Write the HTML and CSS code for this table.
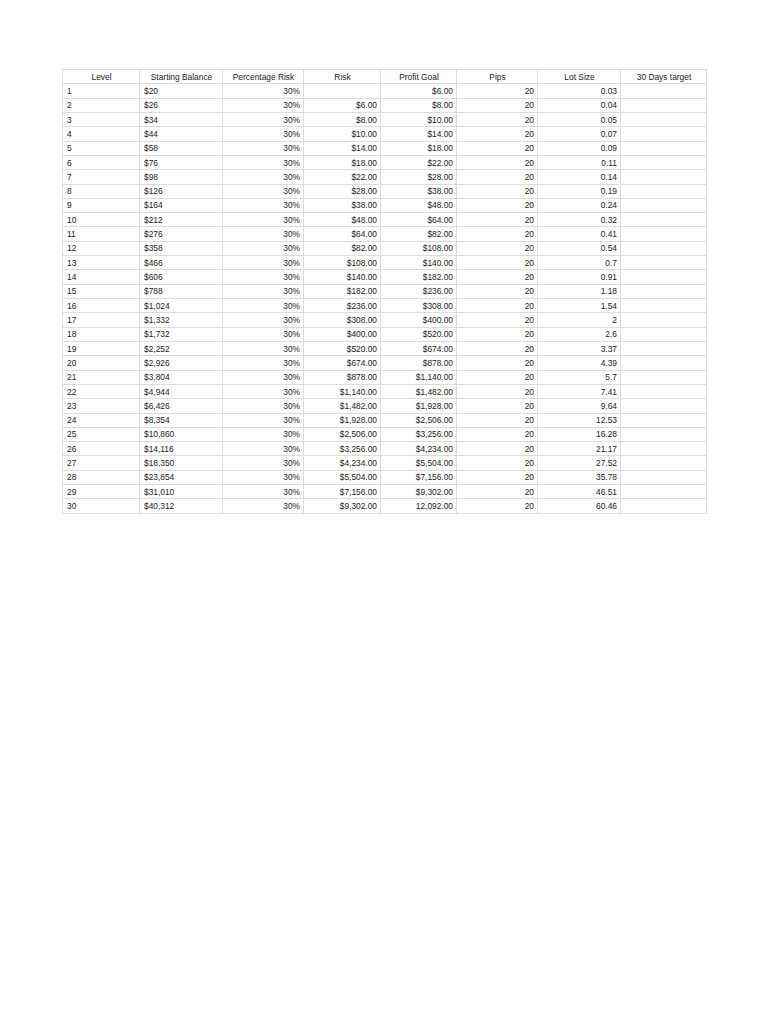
FILE: index.html
```html
<!DOCTYPE html>
<html>
<head>
<meta charset="utf-8">
<link rel="stylesheet" href="styles.css">
</head>
<body>
<div class="page">
<table class="sheet">
<colgroup>
<col class="c1"><col class="c2"><col class="c3"><col class="c4"><col class="c5"><col class="c6"><col class="c7"><col class="c8">
</colgroup>
<thead>
<tr><th>Level</th><th>Starting Balance</th><th>Percentage Risk</th><th>Risk</th><th>Profit Goal</th><th>Pips</th><th>Lot Size</th><th>30 Days target</th></tr>
</thead>
<tbody>
<tr><td>1</td><td>$20</td><td class="r">30%</td><td class="r"></td><td class="r">$6.00</td><td class="r">20</td><td class="r">0.03</td><td></td></tr>
<tr><td>2</td><td>$26</td><td class="r">30%</td><td class="r">$6.00</td><td class="r">$8.00</td><td class="r">20</td><td class="r">0.04</td><td></td></tr>
<tr><td>3</td><td>$34</td><td class="r">30%</td><td class="r">$8.00</td><td class="r">$10.00</td><td class="r">20</td><td class="r">0.05</td><td></td></tr>
<tr><td>4</td><td>$44</td><td class="r">30%</td><td class="r">$10.00</td><td class="r">$14.00</td><td class="r">20</td><td class="r">0.07</td><td></td></tr>
<tr><td>5</td><td>$58</td><td class="r">30%</td><td class="r">$14.00</td><td class="r">$18.00</td><td class="r">20</td><td class="r">0.09</td><td></td></tr>
<tr><td>6</td><td>$76</td><td class="r">30%</td><td class="r">$18.00</td><td class="r">$22.00</td><td class="r">20</td><td class="r">0.11</td><td></td></tr>
<tr><td>7</td><td>$98</td><td class="r">30%</td><td class="r">$22.00</td><td class="r">$28.00</td><td class="r">20</td><td class="r">0.14</td><td></td></tr>
<tr><td>8</td><td>$126</td><td class="r">30%</td><td class="r">$28.00</td><td class="r">$38.00</td><td class="r">20</td><td class="r">0.19</td><td></td></tr>
<tr><td>9</td><td>$164</td><td class="r">30%</td><td class="r">$38.00</td><td class="r">$48.00</td><td class="r">20</td><td class="r">0.24</td><td></td></tr>
<tr><td>10</td><td>$212</td><td class="r">30%</td><td class="r">$48.00</td><td class="r">$64.00</td><td class="r">20</td><td class="r">0.32</td><td></td></tr>
<tr><td>11</td><td>$276</td><td class="r">30%</td><td class="r">$64.00</td><td class="r">$82.00</td><td class="r">20</td><td class="r">0.41</td><td></td></tr>
<tr><td>12</td><td>$358</td><td class="r">30%</td><td class="r">$82.00</td><td class="r">$108.00</td><td class="r">20</td><td class="r">0.54</td><td></td></tr>
<tr><td>13</td><td>$466</td><td class="r">30%</td><td class="r">$108.00</td><td class="r">$140.00</td><td class="r">20</td><td class="r">0.7</td><td></td></tr>
<tr><td>14</td><td>$606</td><td class="r">30%</td><td class="r">$140.00</td><td class="r">$182.00</td><td class="r">20</td><td class="r">0.91</td><td></td></tr>
<tr><td>15</td><td>$788</td><td class="r">30%</td><td class="r">$182.00</td><td class="r">$236.00</td><td class="r">20</td><td class="r">1.18</td><td></td></tr>
<tr><td>16</td><td>$1,024</td><td class="r">30%</td><td class="r">$236.00</td><td class="r">$308.00</td><td class="r">20</td><td class="r">1.54</td><td></td></tr>
<tr><td>17</td><td>$1,332</td><td class="r">30%</td><td class="r">$308.00</td><td class="r">$400.00</td><td class="r">20</td><td class="r">2</td><td></td></tr>
<tr><td>18</td><td>$1,732</td><td class="r">30%</td><td class="r">$400.00</td><td class="r">$520.00</td><td class="r">20</td><td class="r">2.6</td><td></td></tr>
<tr><td>19</td><td>$2,252</td><td class="r">30%</td><td class="r">$520.00</td><td class="r">$674.00</td><td class="r">20</td><td class="r">3.37</td><td></td></tr>
<tr><td>20</td><td>$2,926</td><td class="r">30%</td><td class="r">$674.00</td><td class="r">$878.00</td><td class="r">20</td><td class="r">4.39</td><td></td></tr>
<tr><td>21</td><td>$3,804</td><td class="r">30%</td><td class="r">$878.00</td><td class="r">$1,140.00</td><td class="r">20</td><td class="r">5.7</td><td></td></tr>
<tr><td>22</td><td>$4,944</td><td class="r">30%</td><td class="r">$1,140.00</td><td class="r">$1,482.00</td><td class="r">20</td><td class="r">7.41</td><td></td></tr>
<tr><td>23</td><td>$6,426</td><td class="r">30%</td><td class="r">$1,482.00</td><td class="r">$1,928.00</td><td class="r">20</td><td class="r">9.64</td><td></td></tr>
<tr><td>24</td><td>$8,354</td><td class="r">30%</td><td class="r">$1,928.00</td><td class="r">$2,506.00</td><td class="r">20</td><td class="r">12.53</td><td></td></tr>
<tr><td>25</td><td>$10,860</td><td class="r">30%</td><td class="r">$2,506.00</td><td class="r">$3,256.00</td><td class="r">20</td><td class="r">16.28</td><td></td></tr>
<tr><td>26</td><td>$14,116</td><td class="r">30%</td><td class="r">$3,256.00</td><td class="r">$4,234.00</td><td class="r">20</td><td class="r">21.17</td><td></td></tr>
<tr><td>27</td><td>$18,350</td><td class="r">30%</td><td class="r">$4,234.00</td><td class="r">$5,504.00</td><td class="r">20</td><td class="r">27.52</td><td></td></tr>
<tr><td>28</td><td>$23,854</td><td class="r">30%</td><td class="r">$5,504.00</td><td class="r">$7,156.00</td><td class="r">20</td><td class="r">35.78</td><td></td></tr>
<tr><td>29</td><td>$31,010</td><td class="r">30%</td><td class="r">$7,156.00</td><td class="r">$9,302.00</td><td class="r">20</td><td class="r">46.51</td><td></td></tr>
<tr><td>30</td><td>$40,312</td><td class="r">30%</td><td class="r">$9,302.00</td><td class="r">12,092.00</td><td class="r">20</td><td class="r">60.46</td><td></td></tr>
</tbody>
</table>
</div>
</body>
</html>
```
FILE: styles.css
```css
html, body {
  margin: 0;
  padding: 0;
  background: #ffffff;
}
.page {
  padding: 69px 0 0 62px;
}
.sheet {
  border-collapse: collapse;
  table-layout: fixed;
  width: 644px;
  font-family: "Liberation Sans", Arial, sans-serif;
  font-size: 8.4px;
  color: #222222;
}
.c1 { width: 77px; }
.c2 { width: 83px; }
.c3 { width: 81px; }
.c4 { width: 77px; }
.c5 { width: 76px; }
.c6 { width: 81px; }
.c7 { width: 83px; }
.c8 { width: 86px; }
.sheet tr {
  height: 14.32px;
}
.sheet th,
.sheet td {
  border: 1px solid #dcdcdc;
  padding: 0 3px 0 4px;
  line-height: 12px;
  white-space: nowrap;
  overflow: hidden;
  text-align: left;
  vertical-align: middle;
}
.sheet th {
  font-weight: normal;
  text-align: center;
}
.sheet td.r {
  text-align: right;
}
```
